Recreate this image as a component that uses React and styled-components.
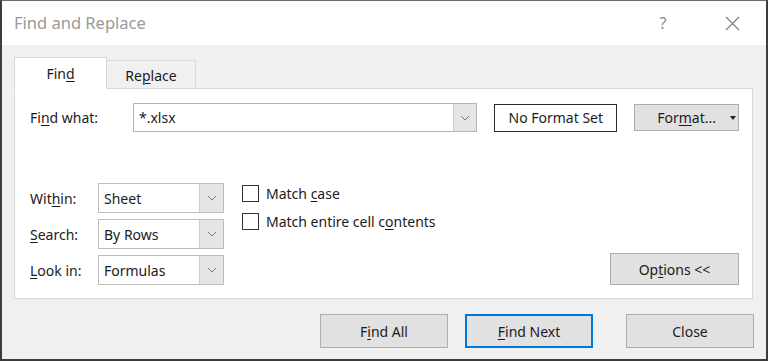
import React from 'react';
import styled, { createGlobalStyle } from 'styled-components';

const Global = createGlobalStyle`
    html, body {
        margin: 0;
        padding: 0;
        background: #ffffff;
    }
    body {
        font-family: "Noto Sans", "Open Sans", sans-serif;
        color: #1b1b1b;
    }
`;

const Window = styled.div`
    box-sizing: border-box;
    width: 768px;
    height: 361px;
    border: 2px solid #3c3c3c;
    border-top: 1px solid #6a6a6a;
    background: #f0f0f0;
    display: flex;
    flex-direction: column;
`;

const TitleBar = styled.div`
    height: 44px;
    background: #ffffff;
    display: flex;
    align-items: center;
    padding: 0 0 0 12px;
    flex-shrink: 0;
`;

const Title = styled.div`
    flex: 1;
    font-size: 16.5px;
    color: #9a9a9a;
    padding-bottom: 2px;
`;

const TitleButton = styled.div`
    width: ${p => p.w}px;
    height: 44px;
    margin-right: ${p => p.mr || 0}px;
    display: flex;
    align-items: center;
    justify-content: center;
    color: #8c8c8c;
    font-size: 16px;
`;

const Body = styled.div`
    flex: 1;
    padding: 12px 13px 0 12px;
    display: flex;
    flex-direction: column;
`;

const Tabs = styled.div`
    display: flex;
    align-items: flex-end;
    height: 32px;
    position: relative;
    z-index: 1;
`;

const Tab = styled.div`
    box-sizing: border-box;
    width: ${p => p.w}px;
    height: ${p => (p.active ? 32 : 29)}px;
    display: flex;
    align-items: center;
    justify-content: center;
    font-size: 14px;
    background: ${p => (p.active ? '#ffffff' : '#f0f0f0')};
    border: 1px solid #d9d9d9;
    border-bottom: ${p => (p.active ? '1px solid #ffffff' : '1px solid #d9d9d9')};
    border-left: ${p => (p.active ? '1px solid #d9d9d9' : 'none')};
    padding-top: ${p => (p.active ? 0 : 1)}px;
`;

const Panel = styled.div`
    box-sizing: border-box;
    height: 211px;
    margin-top: -1px;
    background: #ffffff;
    border: 1px solid #d9d9d9;
    padding: 14px 13px 13px 15px;
    display: flex;
    flex-direction: column;
    justify-content: space-between;
`;

const Row = styled.div`
    display: flex;
    align-items: center;
`;

const Label = styled.div`
    width: ${p => p.w}px;
    font-size: 14px;
    flex-shrink: 0;
`;

const U = styled.span`
    text-decoration: underline;
    text-underline-offset: 2px;
    text-decoration-thickness: 1px;
`;

const Combo = styled.div`
    box-sizing: border-box;
    width: ${p => p.w}px;
    height: ${p => p.h}px;
    border: 1px solid ${p => p.line};
    background: #ffffff;
    display: flex;
    align-items: stretch;
    font-size: 14px;
`;

const ComboText = styled.div`
    flex: 1;
    display: flex;
    align-items: center;
    padding-left: ${p => p.pad}px;
`;

const ComboArrow = styled.div`
    width: ${p => p.w}px;
    background: #e5e5e5;
    border-left: 1px solid #cfcfcf;
    display: flex;
    align-items: center;
    justify-content: center;
`;

const FormatBox = styled.div`
    box-sizing: border-box;
    width: 123px;
    height: 28px;
    margin-left: 17px;
    border: 1px solid #2b2b2b;
    display: flex;
    align-items: center;
    justify-content: center;
    font-size: 14px;
`;

const Button = styled.div`
    box-sizing: border-box;
    width: ${p => p.w}px;
    height: ${p => p.h}px;
    background: #e1e1e1;
    border: ${p => (p.focus ? '2px solid #0078d7' : '1px solid #adadad')};
    display: flex;
    align-items: center;
    justify-content: center;
    font-size: 14px;
    margin-left: ${p => p.ml || 0}px;
    gap: ${p => p.gap || 0}px;
`;

const Lower = styled.div`
    display: flex;
    align-items: flex-end;
`;

const Fields = styled.div`
    display: flex;
    flex-direction: column;
    gap: 6px;
`;

const Checks = styled.div`
    align-self: flex-start;
    display: flex;
    flex-direction: column;
    gap: 11px;
    margin-left: 18px;
    padding-top: 2px;
`;

const CheckRow = styled.div`
    display: flex;
    align-items: center;
    gap: 7px;
    font-size: 14px;
    height: 17px;
`;

const Box = styled.div`
    box-sizing: border-box;
    width: 17px;
    height: 17px;
    border: 1px solid #333333;
    background: #ffffff;
`;

const Spacer = styled.div`
    flex: 1;
`;

const Footer = styled.div`
    display: flex;
    justify-content: flex-end;
    align-items: center;
    padding-top: 15px;
    margin-right: -1px;
`;

const Chevron = () => (
    <svg width="10" height="6" viewBox="0 0 10 6">
        <path d="M1 1 L5 5 L9 1" fill="none" stroke="#7a7a7a" strokeWidth="1" />
    </svg>
);

const Select = ({ value }) => (
    <Combo w={126} h={30} line="#bcbcbc">
        <ComboText pad={5}>{value}</ComboText>
        <ComboArrow w={23}><Chevron /></ComboArrow>
    </Combo>
);

class FindReplace extends React.Component {
    render() {
        return (
            <Window>
                <Global />
                <TitleBar>
                    <Title>Find and Replace</Title>
                    <TitleButton w={92}>?</TitleButton>
                    <TitleButton w={46} mr={11}>
                        <svg width="15" height="15" viewBox="0 0 15 15">
                            <path d="M1 1 L14 14 M14 1 L1 14" stroke="#7d7d7d" strokeWidth="1.1" />
                        </svg>
                    </TitleButton>
                </TitleBar>
                <Body>
                    <Tabs>
                        <Tab w={93} active><span>Fin<U>d</U></span></Tab>
                        <Tab w={89}><span>Re<U>p</U>lace</span></Tab>
                    </Tabs>
                    <Panel>
                        <Row>
                            <Label w={103}>Fi<U>n</U>d what:</Label>
                            <Combo w={345} h={29} line="#b4b4b4">
                                <ComboText pad={5}>*.xlsx</ComboText>
                                <ComboArrow w={22}><Chevron /></ComboArrow>
                            </Combo>
                            <FormatBox>No Format Set</FormatBox>
                            <Button w={105} h={27} ml={17} gap={14}>
                                <span>For<U>m</U>at...</span>
                                <svg width="6" height="4" viewBox="0 0 6 4" style={{ marginRight: -20 }}>
                                    <path d="M0 0 L6 0 L3 4 Z" fill="#222" />
                                </svg>
                            </Button>
                        </Row>
                        <Lower>
                            <Fields>
                                <Row>
                                    <Label w={68}>Wit<U>h</U>in:</Label>
                                    <Select value="Sheet" />
                                </Row>
                                <Row>
                                    <Label w={68}><U>S</U>earch:</Label>
                                    <Select value="By Rows" />
                                </Row>
                                <Row>
                                    <Label w={68}><U>L</U>ook in:</Label>
                                    <Select value="Formulas" />
                                </Row>
                            </Fields>
                            <Checks>
                                <CheckRow><Box /><span>Match <U>c</U>ase</span></CheckRow>
                                <CheckRow><Box /><span>Match entire cell c<U>o</U>ntents</span></CheckRow>
                            </Checks>
                            <Spacer />
                            <Button w={129} h={32}><span>Op<U>t</U>ions &lt;&lt;</span></Button>
                        </Lower>
                    </Panel>
                    <Footer>
                        <Button w={128} h={34}><span>F<U>i</U>nd All</span></Button>
                        <Button w={128} h={34} ml={17} focus><span><U>F</U>ind Next</span></Button>
                        <Button w={128} h={34} ml={33}>Close</Button>
                    </Footer>
                </Body>
            </Window>
        );
    }
}

export default FindReplace;
